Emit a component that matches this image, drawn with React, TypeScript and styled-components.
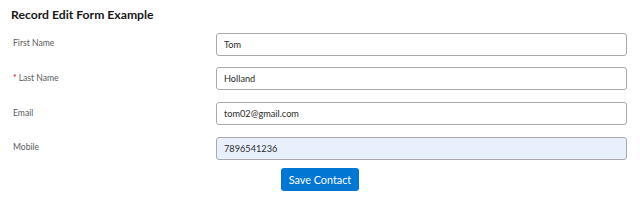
import React from 'react';
import styled, { createGlobalStyle } from 'styled-components';

const GlobalStyle = createGlobalStyle`
  body {
    margin: 0;
    background: #ffffff;
    font-family: Lato, "Noto Sans", Arial, sans-serif;
  }
`;

const fields = [
  { label: 'First Name', value: 'Tom', required: false, filled: false },
  { label: 'Last Name', value: 'Holland', required: true, filled: false },
  { label: 'Email', value: 'tom02@gmail.com', required: false, filled: false },
  { label: 'Mobile', value: '7896541236', required: false, filled: true },
];

function App() {
  return (
    <Card>
      <GlobalStyle />
      <Title>Record Edit Form Example</Title>
      <Form>
        {fields.map((f) => (
          <React.Fragment key={f.label}>
            <Label>
              {f.required && <Required>*</Required>}
              {f.label}
            </Label>
            <Input $filled={f.filled} defaultValue={f.value} />
          </React.Fragment>
        ))}
      </Form>
      <Footer>
        <SaveButton type="button">Save Contact</SaveButton>
      </Footer>
    </Card>
  );
}

const Card = styled.div`
  width: 640px;
  height: 212px;
  padding: 6px 0 0 11px;
  box-sizing: border-box;
`;

const Title = styled.h2`
  margin: 0;
  font-size: 12.2px;
  font-weight: 700;
  line-height: 18px;
  color: #181818;
`;

const Form = styled.div`
  display: grid;
  grid-template-columns: 205px 411px;
  grid-auto-rows: 23px;
  row-gap: 11.7px;
  margin-top: 8.7px;
  align-items: center;
`;

const Label = styled.label`
  display: flex;
  align-items: center;
  padding-left: 2px;
  margin-top: -2px;
  font-size: 8.6px;
  color: #5a5a5a;
`;

const Required = styled.span`
  color: #ba0517;
  font-size: 8.6px;
  margin-right: 2px;
`;

const Input = styled.input<{ $filled: boolean }>`
  box-sizing: border-box;
  width: 100%;
  height: 23px;
  padding: 0 7px;
  border: 1px solid #a9a9a9;
  border-radius: 3px;
  background: ${(p) => (p.$filled ? '#e8f0fe' : '#ffffff')};
  font-family: inherit;
  font-size: 9.2px;
  color: #2b2b2b;
  outline: none;
`;

const Footer = styled.div`
  display: flex;
  padding-left: 270px;
  margin-top: 8.3px;
`;

const SaveButton = styled.button`
  width: 78px;
  height: 23px;
  padding: 0;
  border: none;
  border-radius: 3px;
  background: #0176d3;
  color: #ffffff;
  font-family: inherit;
  font-size: 10.8px;
  cursor: pointer;
`;

export default App;
